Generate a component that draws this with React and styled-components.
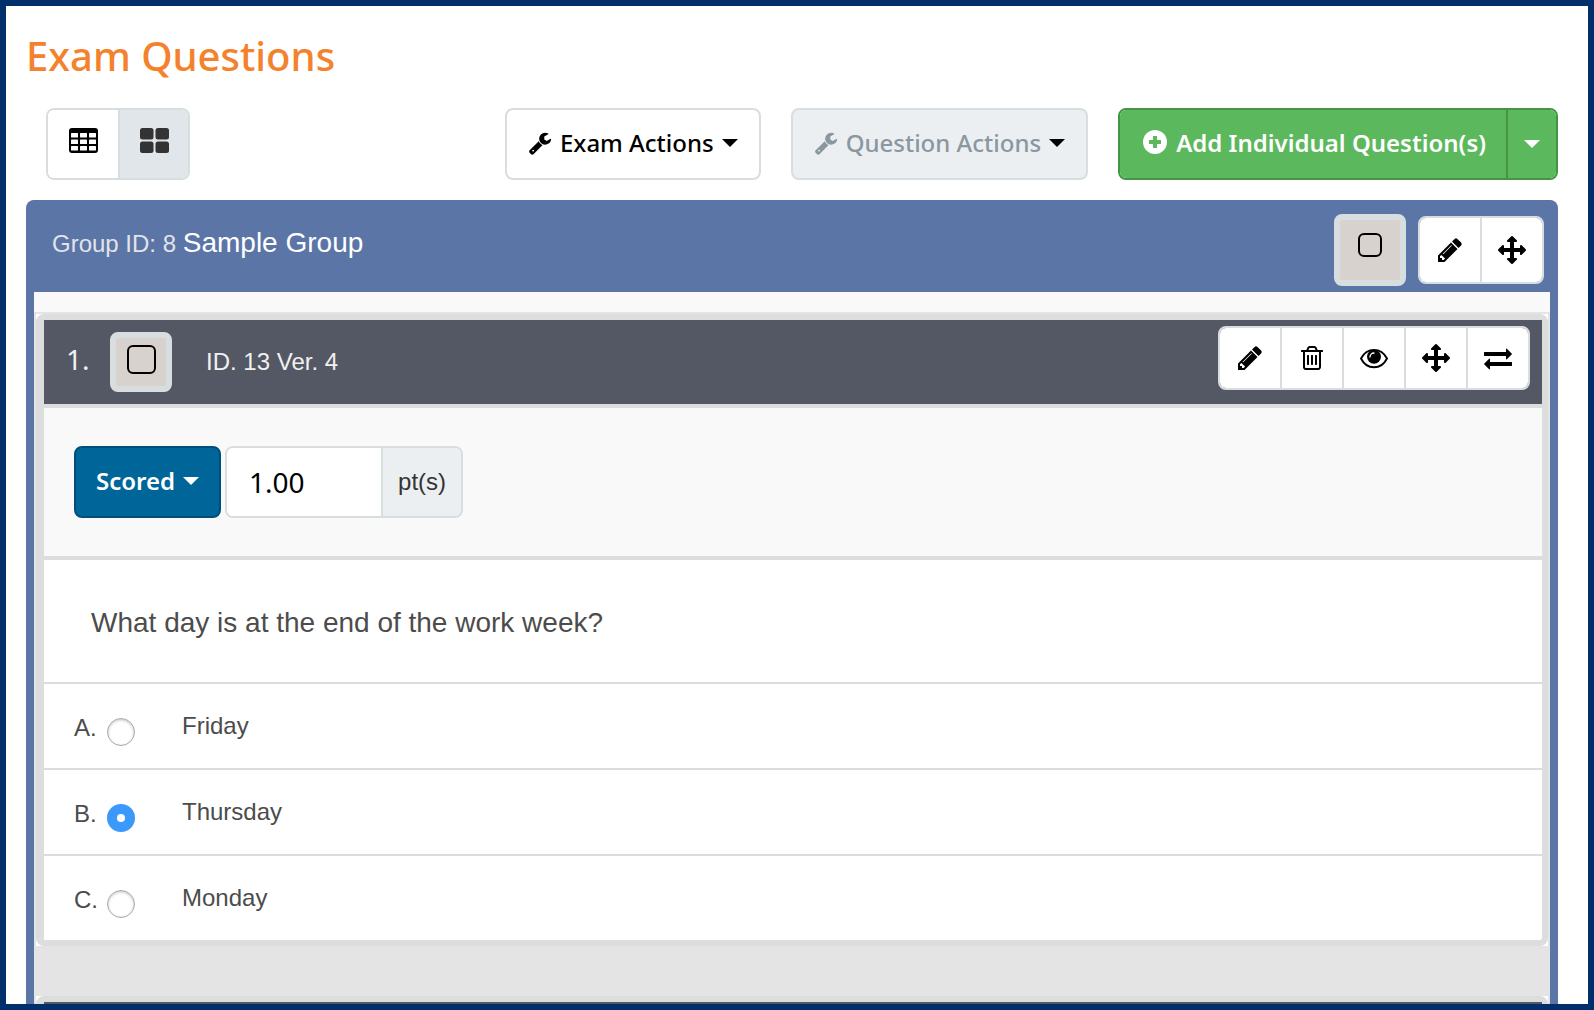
import React, { useState } from 'react'
import styled, { createGlobalStyle, ThemeProvider } from 'styled-components'

const theme = {
  sans: '"Liberation Sans", Arial, sans-serif',
  ui: '"Noto Sans", "Open Sans", sans-serif',
  frame: '#002f6c',
  group: '#5b75a7',
  border: '#d8dee0',
  divider: '#dcdddd',
  muted: '#ebeff2',
  text: '#4c4c4c',
}

const GlobalStyle = createGlobalStyle`
  *, *::before, *::after {
    box-sizing: border-box;
  }
  body {
    margin: 0;
    background: #fff;
  }
  button, input {
    margin: 0;
    font: inherit;
  }
`

const Frame = styled.main`
  height: 100vh;
  overflow: hidden;
  padding: 22px 30px 0 20px;
  border: 6px solid ${(props) => props.theme.frame};
  color: ${(props) => props.theme.text};
  font-family: ${(props) => props.theme.sans};
  font-size: 24px;
  line-height: 28px;
`

const Title = styled.h1`
  margin: 0 0 24px;
  color: #f4812c;
  font-family: ${(props) => props.theme.ui};
  font-size: 40px;
  font-weight: 500;
  line-height: 56px;
`

const Toolbar = styled.div`
  display: flex;
  gap: 30px;
  margin-bottom: 20px;
  padding-left: 20px;
`

const ButtonGroup = styled.div`
  display: flex;
  border: 2px solid ${(props) => props.theme.border};
  border-radius: 8px;
  overflow: hidden;
`

const ViewToggle = styled(ButtonGroup)`
  height: 72px;
  margin-right: auto;
`

const IconButton = styled.button`
  display: flex;
  align-items: center;
  justify-content: center;
  width: 60px;
  height: ${(props) => props.$height || '60px'};
  padding: 0;
  box-sizing: content-box;
  border: 0;
  background: ${(props) => (props.$active ? '#e0e6ea' : '#fff')};
  color: ${(props) => (props.$active ? '#333' : '#000')};
  cursor: pointer;

  & + & {
    border-left: 2px solid ${(props) => props.theme.border};
  }
`

const ViewButton = styled(IconButton)`
  box-sizing: border-box;
  width: 70px;
  height: 68px;
  padding-bottom: 8px;
`

const Button = styled.button`
  display: flex;
  align-items: center;
  justify-content: center;
  gap: 8px;
  height: 72px;
  padding: 0 21px 2px;
  border: 2px solid ${(props) => props.theme.border};
  border-radius: 8px;
  background: #fff;
  color: #000;
  font-family: ${(props) => props.theme.ui};
  font-size: 24px;
  font-weight: 500;
  line-height: 32px;
  white-space: nowrap;
  cursor: pointer;

  &:disabled {
    background: ${(props) => props.theme.muted};
    color: #8b979f;
  }
`

const SuccessGroup = styled(ButtonGroup)`
  border-color: #449543;
`

const SuccessButton = styled(Button)`
  height: 68px;
  padding: 0 20px 2px 22px;
  border: 0;
  border-radius: 0;
  background: #5cb85c;
  color: #fff;
  font-weight: 600;

  & + & {
    padding: 0 16px;
    border-left: 2px solid #449543;
  }
`

const ScoredButton = styled(Button)`
  padding: 0 20px 2px;
  border-color: #004f78;
  background: #006699;
  color: #fff;
  font-weight: 600;
`

const Caret = styled.span`
  border: 8px solid transparent;
  border-top-color: ${(props) => props.$color || 'currentColor'};
  border-bottom: 0;
`

const Group = styled.section`
  border: 8px solid ${(props) => props.theme.group};
  border-top: 0;
  border-bottom: 0;
  border-radius: 8px 8px 0 0;
  background: ${(props) => props.theme.group};
`

const GroupHeader = styled.header`
  display: flex;
  align-items: center;
  gap: 12px;
  height: 92px;
  padding: 14px 6px 6px 18px;
`

const GroupTitle = styled.h2`
  flex: 1;
  margin: 0;
  padding-bottom: 14px;
  color: #e2e4e8;
  font-size: 24px;
  font-weight: 400;
  line-height: 32px;
`

const GroupName = styled.strong`
  color: #fff;
  font-size: 28px;
  font-weight: 400;
`

const Spacer = styled.div`
  height: 22px;
  border-bottom: 2px solid #e4e4e4;
  background: #f9f9f9;
`

const QuestionList = styled.div`
  display: flex;
  flex-direction: column;
  border: solid #e4e4e4;
  border-width: 0 2px;
  background: #fff;
`

const Card = styled.article`
  border: 6px solid ${(props) => props.theme.divider};
  border-left-width: 8px;
  border-radius: 8px;
`

const Gap = styled.div`
  height: 50px;
  background: #e4e4e4;
`

const CardHeader = styled.header`
  display: flex;
  align-items: center;
  min-height: 84px;
  padding: 0 12px 0 22px;
  background: #545864;
  color: #f0f0f0;
`

const CardActions = styled(ButtonGroup)`
  margin-bottom: 8px;
`

const Number = styled.span`
  width: 44px;
  padding-bottom: 6px;
  font-family: ${(props) => props.theme.ui};
  font-size: 28px;
`

const Version = styled.h3`
  flex: 1;
  margin: 0 0 0 34px;
  font-size: 24px;
  font-weight: 400;
`

const SelectBox = styled.label`
  display: flex;
  justify-content: center;
  width: ${(props) => (props.$large ? '72px' : '62px')};
  height: ${(props) => (props.$large ? '72px' : '60px')};
  padding-top: ${(props) => (props.$large ? '13px' : '7px')};
  border: 6px solid ${(props) => props.theme.border};
  border-radius: 8px;
  background: #d8d2ce;
`

const Checkbox = styled.input`
  appearance: none;
  width: ${(props) => (props.$large ? '29px' : '24px')};
  height: ${(props) => (props.$large ? '29px' : '24px')};
  border: 2px solid #000;
  border-radius: 6px;

  &:checked {
    background: #000;
  }
`

const ScoreRow = styled.div`
  display: flex;
  gap: 4px;
  padding: 38px 30px;
  border: solid ${(props) => props.theme.divider};
  border-width: 4px 0;
  background: #f9f9f9;
`

const Points = styled.label`
  display: flex;
  border: 2px solid ${(props) => props.theme.border};
  border-radius: 8px;
  overflow: hidden;
`

const PointsInput = styled.input`
  width: 154px;
  padding: 0 22px;
  border: 0;
  background: #fff;
  color: #000;
  font-family: ${(props) => props.theme.ui};
  font-size: 28px;
`

const PointsUnit = styled.span`
  display: flex;
  align-items: center;
  padding: 0 15px;
  border-left: 2px solid ${(props) => props.theme.border};
  background: ${(props) => props.theme.muted};
  color: #333;
`

const QuestionText = styled.p`
  margin: 0;
  padding: 47px 47px 43px;
  font-size: 28px;
  line-height: 32px;
`

const Option = styled.label`
  display: flex;
  align-items: center;
  height: 86px;
  padding: 0 30px;
  border-top: 2px solid ${(props) => props.theme.border};
`

const Letter = styled.span`
  width: 33px;
  padding-top: 4px;
`

const Radio = styled.input`
  appearance: none;
  width: 28px;
  height: 28px;
  margin-top: 12px;
  border: 1px solid #aaa;
  border-radius: 50%;
  background: #fff;
  box-shadow: inset 0 1px 3px rgba(0, 0, 0, 0.25);

  &:checked {
    border: 10px solid #3b99fc;
    box-shadow: none;
  }
`

const OptionText = styled.span`
  margin-left: 47px;
`

const icons = {
  pencil: 'M491 1536l91-91-235-235-91 91v107h128v128h107zm523-928q0-22-22-22-10 0-17 7l-542 542q-7 7-7 17 0 22 22 22 10 0 17-7l542-542q7-7 7-17zm-54-192l416 416-832 832h-416v-416zm683 96q0 53-37 90l-166 166-416-416 166-165q36-38 90-38 53 0 91 38l235 234q37 39 37 91z',
  wrench: 'M448 1472q0-26-19-45t-45-19-45 19-19 45 19 45 45 19 45-19 19-45zm644-420l-682 682q-37 37-90 37-52 0-91-37l-106-108q-38-36-38-90 0-53 38-91l681-681q39 98 114.5 173.5t173.5 114.5zm634-435q0 39-23 106-47 134-164.5 217.5t-258.5 83.5q-185 0-316.5-131.5t-131.5-316.5 131.5-316.5 316.5-131.5q58 0 121.5 16.5t107.5 46.5q16 11 16 28t-16 28l-293 169v224l193 107q5-3 79-48.5t135.5-81 70.5-35.5q15 0 23.5 10t8.5 25z',
  move: 'M1792 896q0 26-19 45l-256 256q-19 19-45 19t-45-19-19-45v-128h-384v384h128q26 0 45 19t19 45-19 45l-256 256q-19 19-45 19t-45-19l-256-256q-19-19-19-45t19-45 45-19h128v-384h-384v128q0 26-19 45t-45 19-45-19l-256-256q-19-19-19-45t19-45l256-256q19-19 45-19t45 19 19 45v128h384v-384h-128q-26 0-45-19t-19-45 19-45l256-256q19-19 45-19t45 19l256 256q19 19 19 45t-19 45-45 19h-128v384h384v-128q0-26 19-45t45-19 45 19l256 256q19 19 19 45z',
  exchange: 'M1792 1184v192q0 13-9.5 22.5t-22.5 9.5h-1376v192q0 13-9.5 22.5t-22.5 9.5q-12 0-24-10l-319-320q-9-9-9-22 0-14 9-23l320-320q9-9 23-9 13 0 22.5 9.5t9.5 22.5v192h1376q13 0 22.5 9.5t9.5 22.5zm0-544q0 14-9 23l-320 320q-9 9-23 9-13 0-22.5-9.5t-9.5-22.5v-192h-1376q-13 0-22.5-9.5t-9.5-22.5v-192q0-13 9.5-22.5t22.5-9.5h1376v-192q0-14 9-23t23-9q12 0 24 10l319 319q9 9 9 23z',
  trash: 'M704 736v576q0 14-9 23t-23 9h-64q-14 0-23-9t-9-23v-576q0-14 9-23t23-9h64q14 0 23 9t9 23zm256 0v576q0 14-9 23t-23 9h-64q-14 0-23-9t-9-23v-576q0-14 9-23t23-9h64q14 0 23 9t9 23zm256 0v576q0 14-9 23t-23 9h-64q-14 0-23-9t-9-23v-576q0-14 9-23t23-9h64q14 0 23 9t9 23zm128 724v-948h-896v948q0 22 7 40.5t14.5 27 10.5 8.5h832q3 0 10.5-8.5t14.5-27 7-40.5zm-672-1076h448l-48-117q-7-9-17-11h-317q-10 2-17 11zm928 32v64q0 14-9 23t-23 9h-96v948q0 83-47 143.5t-113 60.5h-832q-66 0-113-58.5t-47-141.5v-952h-96q-14 0-23-9t-9-23v-64q0-14 9-23t23-9h309l70-167q15-37 54-63t79-26h320q40 0 79 26t54 63l70 167h309q14 0 23 9t9 23z',
}

const Icon = ({ name, size = 28 }) => (
  <svg width={size} height={size} viewBox="0 0 1792 1792" fill="currentColor" aria-hidden="true">
    <path d={icons[name]} />
  </svg>
)

const EyeIcon = () => (
  <svg width="28" height="28" viewBox="0 0 28 28" fill="none" stroke="currentColor" aria-hidden="true">
    <path d="M1 14.500C4 8.800 8.500 5.900 14 5.900S24 8.800 27 14.500C24 20.500 19.500 23.300 14 23.300S4 20.500 1 14.500Z" strokeWidth="1.900" strokeLinejoin="round" />
    <circle cx="14" cy="12.800" r="7" fill="currentColor" stroke="none" />
    <path d="M10 13a4 4 0 0 1 4-4" stroke="#fff" strokeWidth="1.300" strokeLinecap="round" />
  </svg>
)

const TableIcon = () => (
  <svg width="29" height="25" viewBox="0 0 29 25" aria-hidden="true">
    <rect width="29" height="25" rx="3" fill="currentColor" />
    <g fill="#fff">
      {[5, 11.5, 18].map((y) => [2, 11, 20].map((x) => (
        <rect key={`${x}-${y}`} x={x} y={y} width="7" height="4.500" rx="0.500" />
      )))}
    </g>
  </svg>
)

const LargeGridIcon = () => (
  <svg width="29" height="25" viewBox="0 0 29 25" fill="currentColor" aria-hidden="true">
    <rect width="13.500" height="11.500" rx="2.500" />
    <rect x="15.500" width="13.500" height="11.500" rx="2.500" />
    <rect y="13.500" width="13.500" height="11.500" rx="2.500" />
    <rect x="15.500" y="13.500" width="13.500" height="11.500" rx="2.500" />
  </svg>
)

const PlusCircleIcon = () => (
  <svg width="26" height="26" viewBox="0 0 26 26" aria-hidden="true">
    <circle cx="13" cy="12" r="12" fill="#fff" />
    <path d="M13 6v12M7 12h12" stroke="#5cb85c" strokeWidth="4" />
  </svg>
)

const options = [
  { letter: 'A.', text: 'Friday' },
  { letter: 'B.', text: 'Thursday' },
  { letter: 'C.', text: 'Monday' },
]

const QuestionCard = () => {
  const [answer, setAnswer] = useState('B.')

  return (
    <Card>
      <CardHeader>
        <Number>1.</Number>
        <SelectBox>
          <Checkbox type="checkbox" $large aria-label="Select question 1" />
        </SelectBox>
        <Version>ID. 13 Ver. 4</Version>
        <CardActions>
          <IconButton type="button" aria-label="Edit question"><Icon name="pencil" /></IconButton>
          <IconButton type="button" aria-label="Delete question"><Icon name="trash" /></IconButton>
          <IconButton type="button" aria-label="Preview question"><EyeIcon /></IconButton>
          <IconButton type="button" aria-label="Move question"><Icon name="move" /></IconButton>
          <IconButton type="button" aria-label="Replace question"><Icon name="exchange" /></IconButton>
        </CardActions>
      </CardHeader>
      <ScoreRow>
        <ScoredButton type="button">Scored<Caret /></ScoredButton>
        <Points>
          <PointsInput type="text" defaultValue="1.00" />
          <PointsUnit>pt(s)</PointsUnit>
        </Points>
      </ScoreRow>
      <QuestionText>What day is at the end of the work week?</QuestionText>
      {options.map(({ letter, text }) => (
        <Option key={letter}>
          <Letter>{letter}</Letter>
          <Radio
            type="radio"
            name="answer"
            checked={answer === letter}
            onChange={() => setAnswer(letter)}
          />
          <OptionText>{text}</OptionText>
        </Option>
      ))}
    </Card>
  )
}

const App = () => (
  <ThemeProvider theme={theme}>
    <GlobalStyle />
    <Frame>
      <Title>Exam Questions</Title>
      <Toolbar>
        <ViewToggle>
          <ViewButton type="button" aria-label="Table view"><TableIcon /></ViewButton>
          <ViewButton type="button" aria-label="Card view" $active><LargeGridIcon /></ViewButton>
        </ViewToggle>
        <Button type="button"><Icon name="wrench" size={24} />Exam Actions<Caret /></Button>
        <Button type="button" disabled>
          <Icon name="wrench" size={24} />Question Actions<Caret $color="#000" />
        </Button>
        <SuccessGroup>
          <SuccessButton type="button"><PlusCircleIcon />Add Individual Question(s)</SuccessButton>
          <SuccessButton type="button" aria-label="More ways to add"><Caret /></SuccessButton>
        </SuccessGroup>
      </Toolbar>
      <Group>
        <GroupHeader>
          <GroupTitle>Group ID: 8 <GroupName>Sample Group</GroupName></GroupTitle>
          <SelectBox $large>
            <Checkbox type="checkbox" aria-label="Select group" />
          </SelectBox>
          <ButtonGroup>
            <IconButton type="button" $height="64px" aria-label="Edit group"><Icon name="pencil" /></IconButton>
            <IconButton type="button" $height="64px" aria-label="Move group"><Icon name="move" /></IconButton>
          </ButtonGroup>
        </GroupHeader>
        <Spacer />
        <QuestionList>
          <QuestionCard />
          <Gap />
          <Card>
            <CardHeader />
          </Card>
        </QuestionList>
      </Group>
    </Frame>
  </ThemeProvider>
)

export default App
